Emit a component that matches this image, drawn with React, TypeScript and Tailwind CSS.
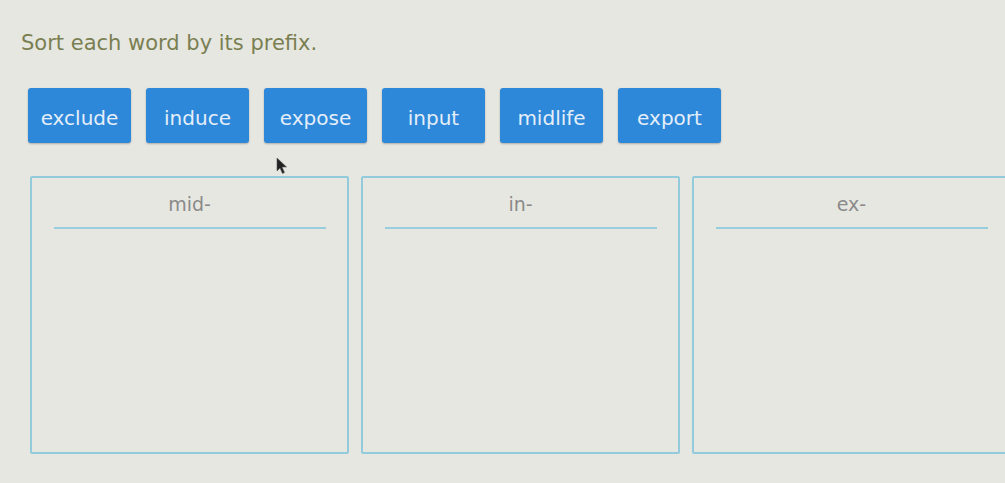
import React from "react";

const words = ["exclude", "induce", "expose", "input", "midlife", "export"];
const bins = ["mid-", "in-", "ex-"];

export default function App() {
  return (
    <div
      className="relative w-[1005px] h-[483px] overflow-hidden bg-[#e7e7e1]"
      style={{ fontFamily: '"DejaVu Sans", Verdana, sans-serif' }}
    >
      <div className="pl-[21px] pt-[30px] text-[21px] leading-[26px] text-[#7a7f52]">
        Sort each word by its prefix.
      </div>
      <div className="flex gap-[15px] pl-[28px] mt-[32px]">
        {words.map((w) => (
          <div
            key={w}
            className="w-[103px] h-[55px] pt-[4px] rounded-[3px] bg-[#2d88da] flex items-center justify-center text-[20px] text-[#e4eef8] shadow-[0_1px_2px_rgba(0,0,0,0.25)]"
          >
            {w}
          </div>
        ))}
      </div>
      <div className="flex gap-[12px] pl-[30px] mt-[33px]">
        {bins.map((b) => (
          <div
            key={b}
            className="w-[319px] h-[278px] shrink-0 border-2 border-[#93cbdd] rounded-[2px] flex flex-col items-center"
          >
            <div className="pt-[14px] text-[19px] leading-[24px] text-[#8a8a8a]">{b}</div>
            <div className="mt-[11px] w-[272px] h-[2px] bg-[#98cde0]" />
          </div>
        ))}
      </div>
      <svg
        className="absolute left-[276px] top-[157px]"
        width="12"
        height="18"
        viewBox="0 0 12 18"
      >
        <path d="M1 1 L1 14 L4 11 L6.5 16.5 L8.5 15.5 L6 10 L10.5 10 Z" fill="#222" stroke="#555" strokeWidth="0.6" />
      </svg>
    </div>
  );
}
